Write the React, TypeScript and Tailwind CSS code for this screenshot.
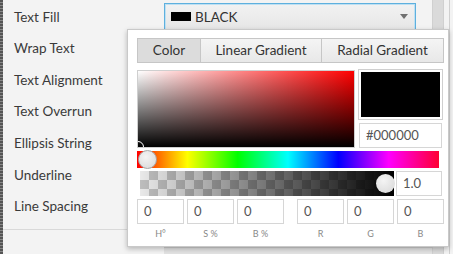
import React from "react";

const labels = [
  "Text Fill",
  "Wrap Text",
  "Text Alignment",
  "Text Overrun",
  "Ellipsis String",
  "Underline",
  "Line Spacing",
];

function Field({ value, w }: { value: string; w: string }) {
  return (
    <div
      className={`${w} h-[25px] border border-[#d6d6d6] bg-white flex items-center pl-[6px] text-[13px] text-[#555]`}
    >
      {value}
    </div>
  );
}

export default function App() {
  const nums = [
    { v: "0", l: "H°" },
    { v: "0", l: "S %" },
    { v: "0", l: "B %" },
  ];
  const rgb = [
    { v: "0", l: "R" },
    { v: "0", l: "G" },
    { v: "0", l: "B" },
  ];
  return (
    <div
      className="relative w-[453px] h-[254px] overflow-hidden bg-[#f3f3f3] flex"
      style={{ fontFamily: "Lato, 'Segoe UI', sans-serif" }}
    >
      {/* dashed left edge */}
      <div className="w-[3px] h-full bg-[repeating-linear-gradient(to_bottom,#555_0,#555_2px,#888_2px,#888_3px)]" />
      <div className="flex flex-col flex-1">
        <div className="flex flex-col pt-[1px]">
          {labels.map((l, i) => (
            <div key={l} className="h-[31.6px] flex items-center">
              <div className="w-[161px] pl-[11px] text-[13.5px] text-[#3a3a3a]">{l}</div>
              {i === 0 && (
                <div className="w-[252px] h-[28px] border border-[#5eb0de] shadow-[inset_0_0_0_1px_#bfe0f2] bg-[linear-gradient(to_bottom,#f2f2f2,#e6e6e6)] flex items-center pl-[6px] pr-[7px]">
                  <div className="w-[20px] h-[9px] bg-black" />
                  <span className="ml-[4px] text-[13.5px] text-[#333] flex-1">BLACK</span>
                  <svg width="8" height="5" viewBox="0 0 8 5">
                    <path d="M0 0 L8 0 L4 5 Z" fill="#707070" />
                  </svg>
                </div>
              )}
            </div>
          ))}
        </div>
        <div className="mt-[7px] h-px w-[430px] bg-[#d9d9d9]" />
        <div className="mt-[17px] ml-[161px] w-[268px] h-[8px] bg-[#e2e2e2] border-t border-[#cfcfcf]" />
      </div>
      {/* right strip */}
      <div className="absolute left-[432px] top-0 w-[12px] h-full border-x border-[#d0d0d0] bg-[#dadada]" />
      <div className="absolute left-[449px] top-0 w-px h-full bg-[#d0d0d0]" />

      {/* popup */}
      <div className="absolute left-[127px] top-[29px] w-[322px] h-[218px] bg-white border border-[#c9c9c9] shadow-[0_2px_5px_rgba(0,0,0,0.25)] pl-[9px] pt-[8px]">
        <div className="flex h-[25px] text-[13.5px] text-[#333]">
          <div className="w-[64px] flex items-center justify-center border border-[#c6c6c6] bg-[#dcdcdc]">Color</div>
          <div className="w-[121px] flex items-center justify-center border border-l-0 border-[#c6c6c6] bg-[linear-gradient(to_bottom,#f4f4f4,#e8e8e8)]">Linear Gradient</div>
          <div className="w-[122px] flex items-center justify-center border border-l-0 border-[#c6c6c6] bg-[linear-gradient(to_bottom,#f4f4f4,#e8e8e8)]">Radial Gradient</div>
        </div>
        <div className="flex mt-[7px] gap-[4px]">
          <div className="relative w-[218px] h-[78px] border border-[#cfcfcf] overflow-hidden bg-[linear-gradient(to_top,#000,rgba(0,0,0,0)),linear-gradient(to_right,#fff,#f00)]">
            <div className="absolute left-[-6px] bottom-[-6px] w-[12px] h-[12px] rounded-full border border-white" />
          </div>
          <div className="flex flex-col gap-[4px] w-[83px]">
            <div className="h-[49px] bg-black border-[2px] border-white outline outline-1 outline-[#cfcfcf]" />
            <Field value="#000000" w="w-[83px]" />
          </div>
        </div>
        <div className="relative mt-[3px] w-[302px] h-[17px] bg-[linear-gradient(to_right,#f00,#ff0,#0f0,#0ff,#00f,#f0f,#f03)]">
          <div className="absolute left-[1px] top-[-1px] w-[19px] h-[19px] rounded-full bg-[radial-gradient(circle_at_40%_35%,#f4f4f4,#d6d6d6)] border border-[#a8a8a8]" />
        </div>
        <div className="flex mt-[3px] items-center">
          <div className="relative ml-[3px] w-[254px] h-[25px] bg-[conic-gradient(#bdbdbd_25%,#e9e9e9_0_50%,#bdbdbd_0_75%,#e9e9e9_0)] bg-[length:18px_18px]">
            <div className="absolute inset-0 bg-[linear-gradient(to_right,rgba(0,0,0,0),#000)]" />
            <div className="absolute left-[236px] top-[3px] w-[19px] h-[19px] rounded-full bg-[radial-gradient(circle_at_40%_35%,#f4f4f4,#d6d6d6)]" />
          </div>
          <div className="ml-[2px]">
            <Field value="1.0" w="w-[46px]" />
          </div>
        </div>
        <div className="flex mt-[3px]">
          <div className="flex gap-[3px]">
            {nums.map((n, i) => (
              <div key={i} className="flex flex-col items-center">
                <Field value={n.v} w="w-[47px]" />
                <span className="mt-[3px] text-[9px] text-[#888]">{n.l}</span>
              </div>
            ))}
          </div>
          <div className="flex gap-[3px] ml-[13px]">
            {rgb.map((n, i) => (
              <div key={i} className="flex flex-col items-center">
                <Field value={n.v} w="w-[47px]" />
                <span className="mt-[3px] text-[9px] text-[#888]">{n.l}</span>
              </div>
            ))}
          </div>
        </div>
      </div>
    </div>
  );
}
